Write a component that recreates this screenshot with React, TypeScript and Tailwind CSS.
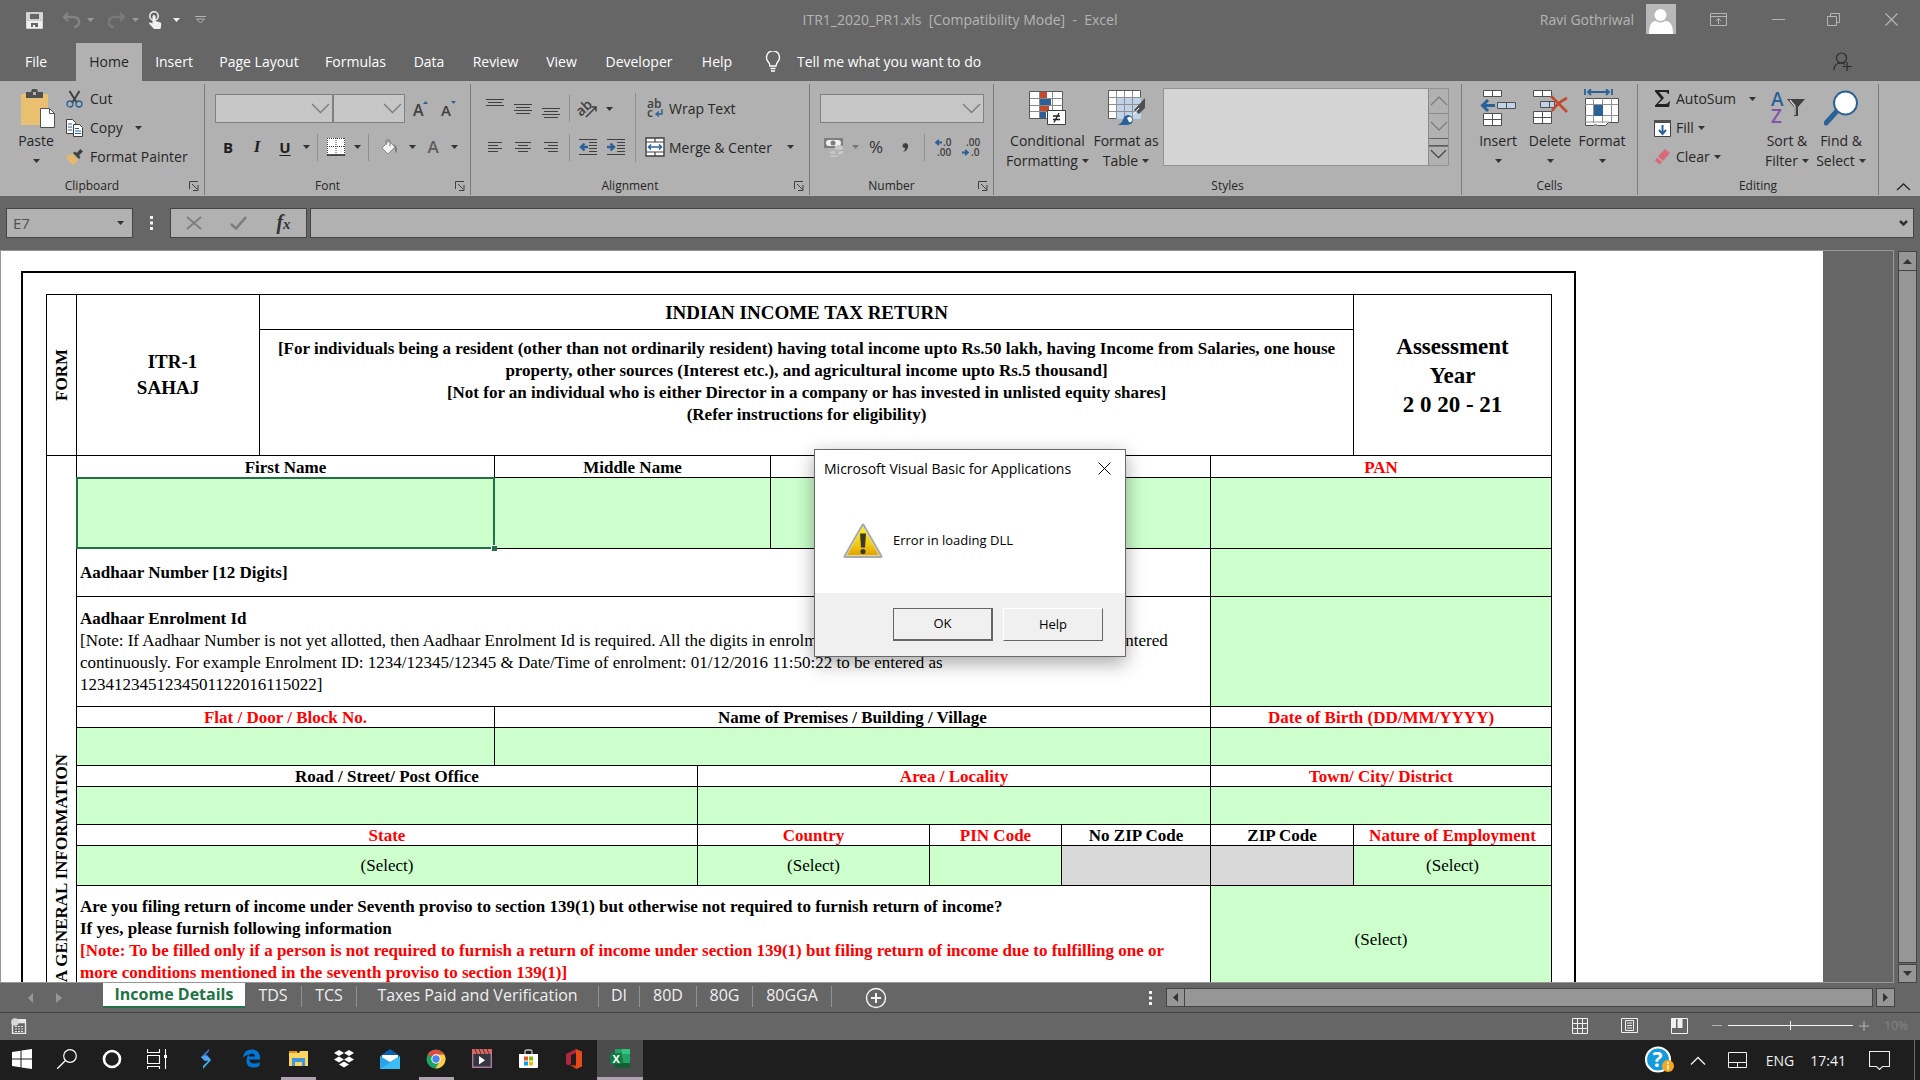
import type { ReactNode } from "react";
import clsx from "clsx";

const INK = "#404040";
const BLUE = "#2b6199";

/* ---------- small shared pieces ---------- */

function Caret({ color = "#333333" }: { color?: string }) {
  return (
    <svg width="7" height="4" viewBox="0 0 7 4" className="shrink-0">
      <path d="M0 0h7L3.500 4z" fill={color} />
    </svg>
  );
}

function CaretButton({ label, color }: { label: string; color?: string }) {
  return (
    <button aria-label={label} className="flex h-7 w-3.5 items-center justify-center">
      <Caret color={color} />
    </button>
  );
}

function IconButton({ label, className, children }: { label: string; className?: string; children: ReactNode }) {
  return (
    <button aria-label={label} className={clsx("flex h-7 shrink-0 items-center justify-center", className ?? "w-7")}>
      {children}
    </button>
  );
}

function Divider() {
  return <span className="mx-1 h-[27px] w-px shrink-0 bg-[#8f8f8f]" />;
}

function RibbonSelect({ label, className }: { label: string; className: string }) {
  return (
    <span className={clsx("relative flex h-[29px]", className)}>
      <select aria-label={label} className="h-full w-full appearance-none border border-[#808080] bg-[#c6c6c6]" />
      <svg width="19" height="11" viewBox="0 0 19 11" className="pointer-events-none absolute top-[9px] right-[3px]">
        <path d="M1 1l8.500 8.500L18 1" fill="none" stroke="#7a7a7a" strokeWidth="1.300" />
      </svg>
    </span>
  );
}

function Group({
  name,
  className,
  launcher,
  children,
}: {
  name: string;
  className: string;
  launcher?: boolean;
  children: ReactNode;
}) {
  return (
    <section aria-label={name} className={clsx("flex flex-col border-r border-[#7b7b7b]", className)}>
      <div className="flex h-[91px] flex-none">{children}</div>
      <div className="flex h-5 items-center pt-[2px] text-[12px] leading-[18px] text-[#262626]">
        <span className="flex-1 text-center">{name}</span>
        {launcher && (
          <button aria-label={`${name} settings`} className="flex w-5 justify-center">
            <svg width="10" height="10" viewBox="0 0 10 10">
              <path d="M.5 8V.5H9M3 3l5.500 5.500M9 4v5.500H4" fill="none" stroke={INK} />
            </svg>
          </button>
        )}
      </div>
    </section>
  );
}

function BigButton({ icon, lines, className }: { icon: ReactNode; lines: [string, string?]; className: string }) {
  return (
    <button className={clsx("flex shrink-0 flex-col items-center text-[14px] leading-5 text-[#262626]", className)}>
      <span className="flex h-[47px] items-center justify-center">{icon}</span>
      <span className="whitespace-nowrap">{lines[0]}</span>
      <span className="flex h-5 items-center gap-1 whitespace-nowrap">
        {lines[1]}
        <Caret />
      </span>
    </button>
  );
}

/* ---------- title bar ---------- */

function TitleBar() {
  return (
    <header className="flex h-[43px] items-start text-[14px] text-[#b5b5b5]">
      <div className="flex h-10 w-[420px] items-center pl-5">
        <IconButton label="Save">
          <svg width="17" height="17" viewBox="0 0 17 17">
            <path d="M1 1h15v15H1zM3 2v6h11V2" fill="none" stroke="#f0f0f0" strokeWidth="1.600" />
            <path d="M1 9h15v7H1z" fill="#f0f0f0" />
            <path d="M5 11h7v4H9v-2H7v2H5z" fill="#666" />
          </svg>
        </IconButton>
        <IconButton label="Undo" className="ml-[11px] w-6">
          <svg width="19" height="16" viewBox="0 0 19 16">
            <path d="M6 1L2 5l4 4M2 5h9q6 0 6 5t-5 5" fill="none" stroke="#838383" strokeWidth="2.400" />
          </svg>
        </IconButton>
        <CaretButton label="Undo history" color="#9a9a9a" />
        <IconButton label="Redo" className="ml-[7px] w-6">
          <svg width="19" height="16" viewBox="0 0 19 16">
            <path d="M13 1l4 4-4 4M17 5H8Q2 5 2 10t5 5" fill="none" stroke="#7a7a7a" strokeWidth="2.400" />
          </svg>
        </IconButton>
        <CaretButton label="Redo history" color="#9a9a9a" />
        <IconButton label="Touch/Mouse Mode" className="ml-[3px] w-5">
          <svg width="15" height="18" viewBox="0 0 15 18">
            <circle cx="6" cy="5" r="4.200" fill="none" stroke="#f0f0f0" strokeWidth="1.500" />
            <path d="M4.500 5q1.500-2 3 0v5l5 1.500q1 .5.800 2L12.500 18H6L1 12.500q0-2 3.500 0z" fill="#f0f0f0" />
          </svg>
        </IconButton>
        <IconButton label="Touch options" className="ml-[3px] w-4">
          <Caret color="#f0f0f0" />
        </IconButton>
        <IconButton label="Customize Quick Access Toolbar" className="w-8">
          <svg width="11" height="8" viewBox="0 0 11 8">
            <path d="M0 .5h11M1.500 3h8l-4 4z" fill="none" stroke="#b5b5b5" />
          </svg>
        </IconButton>
      </div>
      <h1 className="flex h-[38px] flex-1 items-center justify-center whitespace-pre">
        {"ITR1_2020_PR1.xls  [Compatibility Mode]  -  Excel"}
      </h1>
      <div className="flex h-[38px] w-[420px] items-center justify-end">
        <span>Ravi Gothriwal</span>
        <svg width="30" height="30" viewBox="0 0 30 30" className="mr-[18px] ml-3">
          <path d="M0 0h30v30H0z" fill="#b8b8b8" />
          <circle cx="14.500" cy="11" r="6" fill="#fff" />
          <path d="M3 30q0-13 7-13 4.500 3 9 0 8 0 8 13z" fill="#fff" />
        </svg>
        <IconButton label="Ribbon Display Options" className="w-12">
          <svg width="17" height="13" viewBox="0 0 17 13">
            <path d="M.5.500h16v12H.5zM.5 3.500h16M8.500 11V5.500M6 8l2.500-2.500L11 8" fill="none" stroke="#b5b5b5" />
          </svg>
        </IconButton>
        <IconButton label="Minimize" className="ml-2 w-14">
          <span className="h-px w-[13px] bg-[#b5b5b5]" />
        </IconButton>
        <IconButton label="Restore" className="w-14">
          <svg width="14" height="13" viewBox="0 0 14 13">
            <path d="M.5 3.500h9v9h-9zM3.500 3.500v-3h9v9h-3" fill="none" stroke="#b5b5b5" />
          </svg>
        </IconButton>
        <IconButton label="Close" className="w-[58px]">
          <svg width="13" height="13" viewBox="0 0 13 13">
            <path d="M.5.500l12 12M12.500.500l-12 12" fill="none" stroke="#b5b5b5" strokeWidth="1.200" />
          </svg>
        </IconButton>
      </div>
    </header>
  );
}

const TABS = [
  { name: "Insert", width: "w-16" },
  { name: "Page Layout", width: "w-[106px]" },
  { name: "Formulas", width: "w-[87px]" },
  { name: "Data", width: "w-[60px]" },
  { name: "Review", width: "w-[73px]" },
  { name: "View", width: "w-[59px]" },
  { name: "Developer", width: "w-24" },
  { name: "Help", width: "w-[60px]" },
];

function RibbonTabs() {
  return (
    <nav className="flex h-[38px] items-stretch text-[14px] text-white">
      <button className="w-[76px] pr-1 pb-[2px]">File</button>
      <button className="w-[66px] bg-[#b1b1b1] pb-[2px] text-[#262626]">Home</button>
      {TABS.map((tab) => (
        <button key={tab.name} className={clsx("pb-[2px]", tab.width)}>
          {tab.name}
        </button>
      ))}
      <button className="ml-[18px] flex items-center gap-4 pb-[2px]">
        <svg width="16" height="21" viewBox="0 0 16 21">
          <path d="M5 15q0-2.500-2-4.500A6.500 6.500 0 1 1 13 10.500q-2 2-2 4.500zM5.500 17.500h5M6 20h4" fill="none" stroke="#fff" strokeWidth="1.400" />
        </svg>
        Tell me what you want to do
      </button>
      <button aria-label="Share" className="mr-[67px] ml-auto">
        <svg width="20" height="20" viewBox="0 0 20 20">
          <circle cx="8.500" cy="6" r="5" fill="none" stroke="#2b2b2b" strokeWidth="1.200" />
          <path d="M1 18q0-7 7-7 2.500 0 4 1.500M9.500 14.500h9M14 10v9" fill="none" stroke="#2b2b2b" strokeWidth="1.200" />
        </svg>
      </button>
    </nav>
  );
}

/* ---------- ribbon ---------- */

function Lines({ rows, height = 18 }: { rows: [number, number, number][]; height?: number }) {
  return (
    <svg width="18" height={height} viewBox={`0 0 18 ${height}`}>
      {rows.map(([x, y, w]) => (
        <path key={y} d={`M${x} ${y + 0.5}h${w}`} stroke={INK} />
      ))}
    </svg>
  );
}

function ClipboardGroup() {
  return (
    <Group name="Clipboard" className="w-[205px] shrink-0" launcher>
      <BigButton
        className="ml-[9px] w-[54px]"
        lines={["Paste"]}
        icon={
          <svg width="40" height="40" viewBox="-4 0 40 40">
            <path d="M1 6h27v31H1z" fill="#e8c06f" />
            <path d="M6 4h5l1-3h5l1 3h5v6H6z" fill="#505050" />
            <path d="M13 4h3v3h-3z" fill="#b1b1b1" />
            <path d="M20.500 20.500h9l5 5v14h-14z" fill="#fff" stroke="#505050" />
            <path d="M29.500 20.500v5h5" fill="none" stroke="#505050" />
          </svg>
        }
      />
      <div className="flex flex-col pl-[3px] text-[14px] text-[#262626]">
        <button className="flex h-[29px] items-center gap-[7px]">
          <svg width="17" height="18" viewBox="0 0 17 18">
            <path d="M3.500 1l7.500 12M13.500 1L6 13" stroke={INK} strokeWidth="2" />
            <circle cx="4" cy="14" r="3" fill="none" stroke={BLUE} strokeWidth="1.300" />
            <circle cx="13" cy="14" r="3" fill="none" stroke={BLUE} strokeWidth="1.300" />
          </svg>
          Cut
        </button>
        <div className="flex h-[29px] items-center">
          <button className="flex items-center gap-[7px]">
            <svg width="17" height="18" viewBox="0 0 17 18">
              <path d="M.5.500h6l3 3v11h-9z" fill="#fff" stroke={INK} />
              <path d="M2 5h4M2 8h4M2 11h4" stroke={BLUE} />
              <path d="M7.500 5.500h6l3 3v9h-9z" fill="#fff" stroke={INK} />
              <path d="M9 9.500h4M9 12h6M9 14.500h6" stroke={BLUE} />
            </svg>
            Copy
          </button>
          <IconButton label="Copy options" className="ml-2 w-4">
            <Caret />
          </IconButton>
        </div>
        <button className="flex h-[29px] items-center gap-[7px] whitespace-nowrap">
          <svg width="17" height="16" viewBox="0 0 17 16">
            <path d="M0 7l6-2 6 6-4 5q-5-2-8-9z" fill="#e5b96d" />
            <path d="M7 4l6 6 1.500-2L13 6.500l4-4L14.500 0l-4 4L9 2.500z" fill={INK} />
          </svg>
          Format Painter
        </button>
      </div>
    </Group>
  );
}

function FontGroup() {
  return (
    <Group name="Font" className="w-[266px] shrink-0" launcher>
      <div className="flex flex-col gap-[10px] pt-[10px] pl-[10px]">
        <div className="flex items-center">
          <RibbonSelect label="Font family" className="w-[118px]" />
          <RibbonSelect label="Font size" className="w-[72px]" />
          <IconButton label="Increase font size" className="ml-[2px] w-7">
            <svg width="16" height="18" viewBox="0 0 16 18" className="overflow-visible">
              <text x="0" y="16" fontSize="16" fontWeight="600" fill={INK}>A</text>
              <path d="M10 4l2.500-3L15 4z" fill={BLUE} />
            </svg>
          </IconButton>
          <IconButton label="Decrease font size">
            <svg width="16" height="18" viewBox="0 0 16 18" className="overflow-visible">
              <text x="0" y="16" fontSize="15" fontWeight="600" fill={INK}>A</text>
              <path d="M10 1h5l-2.500 3z" fill={BLUE} />
            </svg>
          </IconButton>
        </div>
        <div className="flex items-center text-[15px] text-[#1f1f1f]">
          <button className="w-[26px] font-bold">B</button>
          <button className="ml-[2px] w-7 font-['Liberation_Serif',serif] text-[17px] font-bold italic">I</button>
          <button className="w-7 font-bold underline underline-offset-2">U</button>
          <CaretButton label="Underline style" />
          <Divider />
          <IconButton label="Borders" className="w-7">
            <svg width="18" height="18" viewBox="0 0 18 18">
              <path d="M0 0h18v17H0z" fill="#fff" />
              <path d="M0 .5h18M.5 0v17M17.500 0v17M9 0v17M0 8.500h18" stroke={INK} strokeDasharray="1 1" />
              <path d="M0 17h18" stroke="#222" strokeWidth="1.500" />
            </svg>
          </IconButton>
          <CaretButton label="Border options" />
          <Divider />
          <IconButton label="Fill Color" className="w-8">
            <svg width="17" height="17" viewBox="0 0 17 17">
              <path d="M8 2l6 6-7 7-6-6z" fill="#f2f2f2" stroke="#8a8a8a" />
              <path d="M5 6V2q2-3 4 0v5" fill="none" stroke="#8a8a8a" strokeWidth="1.300" />
              <path d="M12 5q5 1 4 9-3-1-2-6z" fill="#808080" />
            </svg>
          </IconButton>
          <CaretButton label="Fill color options" />
          <button className="w-7 text-[17px] font-semibold text-[#5e5e5e]">A</button>
          <CaretButton label="Font color options" />
        </div>
      </div>
    </Group>
  );
}

function IndentIcon({ flip }: { flip?: boolean }) {
  return (
    <svg width="18" height="16" viewBox="0 0 18 16">
      <path d="M0 .5h18M10 3.500h8M10 6.500h8M10 9.500h8M10 12.500h8M0 15.500h18" stroke={INK} />
      {flip ? (
        <path d="M0 8h6M3.500 4.500L7 8l-3.500 3.500" fill="none" stroke={BLUE} strokeWidth="2.400" />
      ) : (
        <path d="M9 8H3M5.500 4.500L2 8l3.500 3.500" fill="none" stroke={BLUE} strokeWidth="2.400" />
      )}
    </svg>
  );
}

function AlignmentGroup() {
  return (
    <Group name="Alignment" className="w-[339px] shrink-0" launcher>
      <div className="flex flex-col gap-[10px] pt-[10px] pl-[10px]">
        <div className="flex h-[29px] items-center">
          <IconButton label="Top Align"><Lines rows={[[0, 2, 18], [2, 5, 14], [0, 8, 18]]} height={23} /></IconButton>
          <IconButton label="Middle Align"><Lines rows={[[0, 4, 18], [2, 7, 14], [0, 10, 18], [2, 13, 14]]} /></IconButton>
          <IconButton label="Bottom Align"><Lines rows={[[0, 9, 18], [2, 12, 14], [0, 15, 18], [2, 18, 14]]} height={20} /></IconButton>
          <Divider />
          <IconButton label="Orientation" className="w-7">
            <svg width="20" height="18" viewBox="0 0 20 18" className="overflow-visible">
              <text x="-1" y="13" fontSize="14" fontWeight="600" fill={INK} transform="rotate(-42 6 10)">ab</text>
              <path d="M8 17L18 7M13.500 7H18v4.500" fill="none" stroke={INK} strokeWidth="1.500" />
            </svg>
          </IconButton>
          <CaretButton label="Orientation options" />
        </div>
        <div className="flex items-center">
          <IconButton label="Align Left"><Lines rows={[[2, 4, 14], [2, 7, 10], [2, 10, 14], [2, 13, 10]]} /></IconButton>
          <IconButton label="Center"><Lines rows={[[1, 4, 16], [4, 7, 10], [1, 10, 16], [4, 13, 10]]} /></IconButton>
          <IconButton label="Align Right"><Lines rows={[[2, 4, 14], [6, 7, 10], [2, 10, 14], [6, 13, 10]]} /></IconButton>
          <Divider />
          <IconButton label="Decrease Indent"><IndentIcon /></IconButton>
          <IconButton label="Increase Indent"><IndentIcon flip /></IconButton>
        </div>
      </div>
      <span className="mt-[9px] ml-[5px] h-[69px] w-px bg-[#8f8f8f]" />
      <div className="flex flex-col gap-[10px] pt-[10px] pl-[9px] text-[14px] text-[#262626]">
        <button className="flex h-[29px] items-center gap-1">
          <svg width="20" height="20" viewBox="0 0 20 20" className="overflow-visible">
            <text x="2" y="9" fontSize="12" fontWeight="600" fill={INK}>ab</text>
            <text x="2" y="18" fontSize="12" fontWeight="600" fill={INK}>c</text>
            <path d="M17 10v5h-5M14 12.500L11 15l3 2.500" fill="none" stroke={BLUE} strokeWidth="1.400" />
          </svg>
          Wrap Text
        </button>
        <div className="flex h-7 items-center">
          <button className="flex items-center gap-1 whitespace-nowrap">
            <svg width="20" height="20" viewBox="0 0 20 20">
              <path d="M1 1h18v18H1z" fill="#fff" stroke={INK} strokeWidth="1.400" />
              <path d="M1 5h18M1 15h18M10 1v4M10 15v4" stroke={INK} strokeWidth="1.200" />
              <path d="M4 10h12M6 7.500L3.500 10 6 12.500M14 7.500l2.500 2.500-2.500 2.500" fill="none" stroke={BLUE} strokeWidth="1.500" />
            </svg>
            Merge &amp; Center
          </button>
          <IconButton label="Merge options" className="ml-[11px] w-4">
            <Caret />
          </IconButton>
        </div>
      </div>
    </Group>
  );
}

function DecimalIcon({ decrease }: { decrease?: boolean }) {
  return (
    <svg width="18" height="19" viewBox="0 0 18 19" fontSize="10" fontWeight="600" fill={INK} className="overflow-visible">
      <text x={decrease ? 4 : 9} y="8">{decrease ? ".00" : ".0"}</text>
      <text x={decrease ? 9 : 3} y="18">{decrease ? ".0" : ".00"}</text>
      {decrease ? (
        <path d="M0 14.500h5M3 12l3 2.500L3 17" fill="none" stroke={BLUE} strokeWidth="1.800" />
      ) : (
        <path d="M8 4.500H3M5 2L2 4.500 5 7" fill="none" stroke={BLUE} strokeWidth="1.800" />
      )}
    </svg>
  );
}

function NumberGroup() {
  return (
    <Group name="Number" className="w-[184px] shrink-0" launcher>
      <div className="flex flex-col gap-[10px] pt-[10px] pl-[10px]">
        <RibbonSelect label="Number format" className="w-[164px]" />
        <div className="flex items-center">
          <IconButton label="Accounting Number Format" className="w-7">
            <svg width="20" height="19" viewBox="0 0 20 19">
              <path d="M0 0h19v10H0z" fill="#7d7d7d" />
              <path d="M2 5q0-3 3-3h9q3 0 3 3t-3 3H5Q2 8 2 5z" fill="#f0f0f0" />
              <circle cx="9" cy="5" r="2.500" fill="#7d7d7d" />
              <ellipse cx="15" cy="9" rx="4" ry="2" fill="#c9c9c9" />
              <path d="M11 9v6q4 3 8 0V9zM6 14q4-3 8 0v4q-4 2-8 0z" fill="#c9c9c9" />
              <path d="M11 12q4 2 8 0M6 16q4 2 8 0" fill="none" stroke="#999" strokeWidth=".8" />
            </svg>
          </IconButton>
          <CaretButton label="Currency options" color="#777777" />
          <button className="w-7 text-[17px] leading-7 text-[#333]">%</button>
          <button className="flex h-7 w-[30px] items-center justify-center" aria-label="Comma Style">
            <svg width="7" height="9" viewBox="0 0 7 9">
              <path d="M3.500 0Q7 .5 6 4.500 5 8 1 9q2.500-2 2-4Q.5 5 .5 2.500.8.200 3.500 0z" fill={INK} />
            </svg>
          </button>
          <Divider />
          <IconButton label="Increase Decimal"><DecimalIcon /></IconButton>
          <IconButton label="Decrease Decimal"><DecimalIcon decrease /></IconButton>
        </div>
      </div>
    </Group>
  );
}

function StylesGroup() {
  return (
    <Group name="Styles" className="min-w-0 flex-1">
      <BigButton
        className="ml-3 w-[83px]"
        lines={["Conditional", "Formatting"]}
        icon={
          <svg width="37" height="34" viewBox="0 0 37 34">
            <path d="M.5.500h33v27H.5z" fill="#fff" stroke="#595959" />
            <path d="M11 1h7v6h-7zM11 14h9v6h-9z" fill="#c24a2a" />
            <path d="M11 8h11v6H11zM11 21h6v6h-6z" fill={BLUE} />
            <path d="M1 7.500h33M1 14.500h33M1 20.500h33M10.500 1v26M23.500 1v26" stroke="#8a8a8a" />
            <path d="M18.500 19.500h18v14h-18z" fill="#fff" stroke="#404040" />
            <path d="M24 25h7M24 28.500h7M30 22l-5 9.500" stroke="#222" strokeWidth="1.300" />
          </svg>
        }
      />
      <BigButton
        className="w-[74px]"
        lines={["Format as", "Table"]}
        icon={
          <svg width="37" height="35" viewBox="0 0 37 35">
            <path d="M.5.500h32v28H.5z" fill="#fff" stroke="#595959" />
            <path d="M9 8h24v21H9z" fill="#c1d3e9" />
            <path d="M1 7.500h32M1 14.500h32M1 21.500h32M8.500 1v28M16.500 1v28M24.500 1v28" stroke="#909090" />
            <path d="M37 8v10l-6 6-5-4z" fill="#505050" />
            <path d="M31 18l-6 7" stroke="#fff" />
            <path d="M10 35q5-3 6-8 4-4 8 0 3 7-5 8z" fill={BLUE} />
            <path d="M19 28q4-3 5 1 0 4-3 3z" fill="#fff" />
          </svg>
        }
      />
      <div className="mt-1 mr-3 flex h-[78px] flex-1 border border-[#929292]">
        <div className="flex-1 bg-[#d4d4d4]" />
        <div className="flex w-5 flex-col border-l border-[#8a8a8a]">
          <button aria-label="Previous styles" className="flex h-[25px] items-center justify-center border-b border-[#8a8a8a]">
            <svg width="18" height="10" viewBox="0 0 18 10"><path d="M1 9l8-8 8 8" fill="none" stroke="#7d7d7d" strokeWidth="1.300" /></svg>
          </button>
          <button aria-label="Next styles" className="flex h-6 items-center justify-center">
            <svg width="18" height="10" viewBox="0 0 18 10"><path d="M1 1l8 8 8-8" fill="none" stroke="#7d7d7d" strokeWidth="1.300" /></svg>
          </button>
          <button aria-label="More styles" className="flex flex-1 items-center justify-center border-t border-[#666]">
            <svg width="20" height="18" viewBox="0 0 20 18">
              <path d="M0 2.500h20M2 7l8 8 8-8" fill="none" stroke={INK} strokeWidth="1.300" />
            </svg>
          </button>
        </div>
      </div>
    </Group>
  );
}

function CellsGroup() {
  return (
    <Group name="Cells" className="w-[176px] shrink-0">
      <BigButton
        className="ml-[10px] w-[52px]"
        lines={["Insert"]}
        icon={
          <svg width="36" height="36" viewBox="0 0 36 36">
            <path d="M3.500.500h18v6h-18zM3.500 23.500h18v12h-18z" fill="#fff" stroke="#505050" />
            <path d="M12.500 1v5M12.500 24v11M4 29.500h17" stroke="#505050" />
            <path d="M17.500 12.500h18v6h-18z" fill="#c1d3e9" stroke="#505050" />
            <path d="M26.500 13v5" stroke="#505050" />
            <path d="M15 15.500H3M8 10l-5.500 5.500L8 21" fill="none" stroke={BLUE} strokeWidth="3" />
          </svg>
        }
      />
      <BigButton
        className="w-[52px]"
        lines={["Delete"]}
        icon={
          <svg width="36" height="36" viewBox="0 0 36 36">
            <path d="M1.500.500h18v6h-18zM1.500 21.500h18v12h-18z" fill="#fff" stroke="#505050" />
            <path d="M10.500 1v5M10.500 22v11M2 27.500h17" stroke="#505050" />
            <path d="M8.500 11.500h14v6h-14z" fill="#c1d3e9" stroke="#505050" />
            <path d="M17.500 12v5" stroke="#505050" />
            <path d="M19 6q7 7 16 16M35 8q-10 5-15 13" fill="none" stroke="#c24a2a" strokeWidth="2.600" />
          </svg>
        }
      />
      <BigButton
        className="w-[52px]"
        lines={["Format"]}
        icon={
          <svg width="36" height="38" viewBox="0 0 36 38">
            <path d="M1 0v6M28 0v6M4 3h21M7 0L4 3l3 3M22 0l3 3-3 3" fill="none" stroke={BLUE} strokeWidth="1.800" />
            <path d="M1.500 9.500h33v24h-10l-3 3h-8l-2-1-2 1h-8z" fill="#fff" stroke="#505050" />
            <path d="M1 15.500h33M1 26.500h33M9.500 9v25M18.500 9v25M27.500 9v24M1 33h24" stroke="#909090" />
            <path d="M10 16h9v11h-9z" fill={BLUE} />
          </svg>
        }
      />
    </Group>
  );
}

function EditingGroup() {
  return (
    <Group name="Editing" className="w-[241px] shrink-0">
      <div className="flex w-[121px] flex-col pl-4 text-[14px] text-[#262626]">
        <div className="flex h-[29px] items-center">
          <button className="flex items-center gap-1">
            <svg width="18" height="17" viewBox="0 0 18 17">
              <path d="M1 0h14v4h-1q-.5-2-3-2H5l5 6-6 6h7q3 0 4-2.500h1L15 17H1v-1.500L7 9 1 1.500z" fill="#222" />
            </svg>
            AutoSum
          </button>
          <IconButton label="AutoSum options" className="ml-2 w-4">
            <Caret />
          </IconButton>
        </div>
        <button className="flex h-[29px] items-center gap-1">
          <svg width="18" height="18" viewBox="0 0 18 18">
            <path d="M.5 3.500h16v14H.5z" fill="#fff" stroke={INK} />
            <path d="M0 1h17v3H0z" fill="#505050" />
            <path d="M8.500 6v9M5 11l3.500 4L12 11" fill="none" stroke={BLUE} strokeWidth="2" />
          </svg>
          <span className="flex items-center gap-1">Fill <Caret /></span>
        </button>
        <button className="flex h-[29px] items-center gap-1">
          <svg width="18" height="17" viewBox="0 0 18 17">
            <path d="M11 1l5 4-7 8-5-4.500z" fill="#d9687a" />
            <path d="M3 9.500L8 14l-2.500 2.500L1 12.500z" fill="#d9687a" />
          </svg>
          <span className="flex items-center gap-1">Clear <Caret /></span>
        </button>
      </div>
      <BigButton
        className="w-14"
        lines={["Sort &", "Filter"]}
        icon={
          <svg width="36" height="34" viewBox="0 0 36 34" className="overflow-visible">
            <text x="2" y="15" fontSize="19" fontWeight="600" fill={BLUE}>A</text>
            <text x="2" y="32" fontSize="19" fontWeight="600" fill="#8053a5">Z</text>
            <path d="M18 8h18l-7 8v9h-4v-9z" fill="#404040" />
            <path d="M21 9l5 6v9" fill="none" stroke="#e0e0e0" strokeWidth="1.200" />
          </svg>
        }
      />
      <BigButton
        className="w-[52px]"
        lines={["Find &", "Select"]}
        icon={
          <svg width="34" height="36" viewBox="0 0 34 36">
            <path d="M2 33l11-12" stroke={BLUE} strokeWidth="5" strokeLinecap="round" />
            <circle cx="21.500" cy="13" r="11.500" fill="#fff" stroke={BLUE} strokeWidth="2" />
          </svg>
        }
      />
    </Group>
  );
}

function Ribbon() {
  return (
    <div className="flex h-[115px] bg-[#b1b1b1] pt-[3px] pb-px">
      <div className="flex flex-1 items-stretch">
        <ClipboardGroup />
        <FontGroup />
        <AlignmentGroup />
        <NumberGroup />
        <StylesGroup />
        <CellsGroup />
        <EditingGroup />
      </div>
      <button aria-label="Collapse the Ribbon" className="mr-[9px] flex w-[32px] items-end justify-end pb-1">
        <svg width="15" height="9" viewBox="0 0 15 9">
          <path d="M1 8l6.500-6L14 8" fill="none" stroke="#262626" strokeWidth="1.300" />
        </svg>
      </button>
    </div>
  );
}

function Dots() {
  return (
    <svg width="3" height="14" viewBox="0 0 3 14">
      <path d="M0 0h3v3H0zM0 5.500h3v3H0zM0 11h3v3H0z" fill="#f5f5f5" />
    </svg>
  );
}

function FormulaBar() {
  return (
    <div className="flex h-[54px] items-start pt-3 pr-[6px] pl-[6px]">
      <div className="flex h-[30px] w-[127px] items-center border border-[#444] bg-[#b1b1b1] pr-2">
        <input aria-label="Name Box" defaultValue="E7" className="min-w-0 flex-1 bg-transparent pl-[6px] text-[15px] text-[#505050]" />
        <Caret />
      </div>
      <span className="flex h-[30px] w-[37px] items-center justify-center"><Dots /></span>
      <div className="flex h-[30px] w-[137px] items-center justify-around border border-[#444] bg-[#b1b1b1]">
        <IconButton label="Cancel">
          <svg width="16" height="14" viewBox="0 0 16 14"><path d="M1 1l14 12M15 1L1 13" stroke="#7d7d7d" strokeWidth="1.800" /></svg>
        </IconButton>
        <IconButton label="Enter">
          <svg width="17" height="14" viewBox="0 0 17 14"><path d="M1 8l5 4.500L16 1" fill="none" stroke="#7d7d7d" strokeWidth="2.600" /></svg>
        </IconButton>
        <button aria-label="Insert Function" className="w-7 font-['Liberation_Serif',serif] text-[20px] leading-7 font-bold text-[#333] italic">
          f<span className="text-[15px]">x</span>
        </button>
      </div>
      <div className="ml-[3px] flex h-[30px] flex-1 items-center border border-[#444] bg-[#b1b1b1] pr-[5px]">
        <input aria-label="Formula" className="min-w-0 flex-1 bg-transparent px-2 text-[14px]" />
        <svg width="9" height="7" viewBox="0 0 9 7"><path d="M1 1l3.500 3.500L8 1" fill="none" stroke="#333" strokeWidth="2.500" /></svg>
      </div>
    </div>
  );
}

/* ---------- sheet ---------- */

// widths of the form's columns, left to right
const COLUMNS = [30, 183, 235, 203, 73, 159, 132, 149, 143, 198];

const CELL = "border border-black p-0";
const GREEN = "border border-black bg-[#ccffcc] p-0";

function Head({ span = 1, red, children }: { span?: number; red?: boolean; children: ReactNode }) {
  return (
    <th colSpan={span} className={clsx("border border-black px-0 pt-[2px] pb-0 leading-[18px]", red && "text-[#ff0000]")}>
      {children}
    </th>
  );
}

function Entry({ span = 1, label }: { span?: number; label: string }) {
  return (
    <td colSpan={span} className={GREEN}>
      <input aria-label={label} className="block h-5 w-full bg-transparent px-1 outline-none" />
    </td>
  );
}

function Choice({ span = 1, label }: { span?: number; label: string }) {
  return (
    <td colSpan={span} className={GREEN}>
      <select aria-label={label} className="block h-6 w-full appearance-none bg-transparent text-center text-[17px] [text-align-last:center]">
        <option>(Select)</option>
      </select>
    </td>
  );
}

function TaxForm() {
  return (
    <table className="w-[1506px] table-fixed border-collapse text-[17px] leading-[22px]">
      <colgroup>
        {COLUMNS.map((width, i) => (
          <col key={i} style={{ width }} />
        ))}
      </colgroup>
      <tbody>
        <tr className="h-[35px]">
          <th rowSpan={2} className={CELL}>
            <span className="inline-block rotate-180 align-middle leading-5 [writing-mode:vertical-rl]">FORM</span>
          </th>
          <th rowSpan={2} className={clsx(CELL, "text-[19px] leading-[26px]")}>
            <span className="pl-[9px]">ITR-1</span>
            <br />
            SAHAJ
          </th>
          <th colSpan={7} className={clsx(CELL, "pt-[2px] text-[19px]")}>INDIAN INCOME TAX RETURN</th>
          <th rowSpan={2} className={clsx(CELL, "text-[23px] leading-[29px]")}>
            Assessment
            <br />
            Year
            <br />2 0 20 - 21
          </th>
        </tr>
        <tr className="h-[126px]">
          <th colSpan={7} className={clsx(CELL, "pt-2 align-top whitespace-nowrap")}>
            [For individuals being a resident (other than not ordinarily resident) having total income upto Rs.50 lakh, having Income from Salaries, one house
            <br />
            property, other sources (Interest etc.), and agricultural income upto Rs.5 thousand]
            <br />
            [Not for an individual who is either Director in a company or has invested in unlisted equity shares]
            <br />
            (Refer instructions for eligibility)
          </th>
        </tr>
        <tr className="h-[22px]">
          <th rowSpan={11} className={clsx(CELL, "align-bottom")}>
            <span className="inline-block rotate-180 pt-[11px] align-bottom leading-5 whitespace-nowrap [writing-mode:vertical-rl]">A GENERAL INFORMATION</span>
          </th>
          <Head span={2}>First Name</Head>
          <Head span={2}>Middle Name</Head>
          <Head span={3}>Last Name</Head>
          <Head span={2} red>PAN</Head>
        </tr>
        <tr className="h-[71px]">
          <td colSpan={2} className={clsx(GREEN, "relative")}>
            <input aria-label="First Name" className="block h-[70px] w-full bg-transparent px-1 outline-none" />
            {/* selection frame and its fill handle */}
            <span className="pointer-events-none absolute -inset-px border-2 border-[#217346]" />
            <span className="pointer-events-none absolute -right-[3px] -bottom-[3px] h-[6px] w-[6px] border-t border-l border-white bg-[#217346]" />
          </td>
          <Entry span={2} label="Middle Name" />
          <Entry span={3} label="Last Name" />
          <Entry span={2} label="PAN" />
        </tr>
        <tr className="h-12">
          <th colSpan={7} className={clsx(CELL, "pl-[3px] text-left")}>Aadhaar Number [12 Digits]</th>
          <Entry span={2} label="Aadhaar Number" />
        </tr>
        <tr className="h-[110px]">
          <td colSpan={7} className={clsx(CELL, "pl-[3px] whitespace-nowrap")}>
            <b>Aadhaar Enrolment Id</b>
            <br />
            [Note: If Aadhaar Number is not yet allotted, then Aadhaar Enrolment Id is required. All the digits in enrolment id and date/time of enrolment should be entered
            <br />
            continuously. For example Enrolment ID: 1234/12345/12345 &amp; Date/Time of enrolment: 01/12/2016 11:50:22 to be entered as
            <br />
            1234123451234501122016115022]
          </td>
          <Entry span={2} label="Aadhaar Enrolment Id" />
        </tr>
        <tr className="h-[21px]">
          <Head span={2} red>Flat / Door / Block No.</Head>
          <Head span={5}>Name of Premises / Building / Village</Head>
          <Head span={2} red>Date of Birth (DD/MM/YYYY)</Head>
        </tr>
        <tr className="h-[38px]">
          <Entry span={2} label="Flat / Door / Block No." />
          <Entry span={5} label="Name of Premises / Building / Village" />
          <Entry span={2} label="Date of Birth" />
        </tr>
        <tr className="h-[21px]">
          <Head span={3}>Road / Street/ Post Office</Head>
          <Head span={4} red>Area / Locality</Head>
          <Head span={2} red>Town/ City/ District</Head>
        </tr>
        <tr className="h-[38px]">
          <Entry span={3} label="Road / Street/ Post Office" />
          <Entry span={4} label="Area / Locality" />
          <Entry span={2} label="Town/ City/ District" />
        </tr>
        <tr className="h-[21px]">
          <Head span={3} red>State</Head>
          <Head span={2} red>Country</Head>
          <Head red>PIN Code</Head>
          <Head>No ZIP Code</Head>
          <Head>ZIP Code</Head>
          <Head red>Nature of Employment</Head>
        </tr>
        <tr className="h-10">
          <Choice span={3} label="State" />
          <Choice span={2} label="Country" />
          <Entry label="PIN Code" />
          <td className="border border-black bg-[#d9d9d9]" />
          <td className="border border-black bg-[#d9d9d9]" />
          <Choice label="Nature of Employment" />
        </tr>
        <tr className="h-[108px]">
          <th colSpan={7} className={clsx(CELL, "pt-[10px] pl-[3px] text-left align-top whitespace-nowrap")}>
            Are you filing return of income under Seventh proviso to section 139(1) but otherwise not required to furnish return of income?
            <br />
            If yes, please furnish following information
            <br />
            <span className="text-[#ff0000]">
              [Note: To be filled only if a person is not required to furnish a return of income under section 139(1) but filing return of income due to fulfilling one or
              <br />
              more conditions mentioned in the seventh proviso to section 139(1)]
            </span>
          </th>
          <Choice span={2} label="Filing under Seventh proviso" />
        </tr>
      </tbody>
    </table>
  );
}

function ScrollArrow({ label, d, className }: { label: string; d: string; className: string }) {
  return (
    <button aria-label={label} className={clsx("flex shrink-0 items-center justify-center border border-[#444] bg-[#969696]", className)}>
      <svg width="9" height="9" viewBox="0 0 9 9"><path d={d} fill="#333" /></svg>
    </button>
  );
}

function Sheet() {
  return (
    <main className="flex min-h-0 flex-1">
      <div className="flex min-w-0 flex-1 overflow-hidden border border-[#979797]">
        <div className="min-w-0 flex-1 overflow-hidden bg-white pt-5 pl-5 font-['Liberation_Serif',serif] text-black">
          <div className="h-[900px] w-[1555px] border-2 border-black pt-[21px] pl-[23px]">
            <TaxForm />
          </div>
        </div>
        <div className="w-[70px] shrink-0" />
      </div>
      <div className="flex w-[26px] shrink-0 flex-col items-end pt-px pr-[3px] pl-1">
        <ScrollArrow label="Scroll up" d="M0 7h9L4.500 2z" className="h-5 w-[19px]" />
        <div className="w-[19px] flex-1 border-x border-b border-[#444] bg-[#969696]" />
        <ScrollArrow label="Scroll down" d="M0 2h9L4.500 7z" className="mt-px h-[19px] w-[19px]" />
      </div>
    </main>
  );
}

const SHEET_TABS = [
  { name: "TDS", width: "w-[57px]" },
  { name: "TCS", width: "w-[55px]" },
  { name: "Taxes Paid and Verification", width: "w-[242px]" },
  { name: "DI", width: "w-[41px]" },
  { name: "80D", width: "w-[57px]" },
  { name: "80G", width: "w-[56px]" },
  { name: "80GGA", width: "w-[79px]" },
];

function SheetTabs() {
  return (
    <div className="flex h-[30px] items-start border-b border-[#444] text-[16px] text-[#f0f0f0]">
      <div className="flex h-full w-[103px] items-center gap-[22px] pl-7">
        <button aria-label="Previous sheet"><svg width="6" height="10" viewBox="0 0 6 10"><path d="M5 0v10L0 5z" fill="#969696" /></svg></button>
        <button aria-label="Next sheet"><svg width="6" height="10" viewBox="0 0 6 10"><path d="M0 0v10l6-5z" fill="#969696" /></svg></button>
      </div>
      <button className="h-[25px] w-[142px] border-b-2 border-[#217346] bg-white pb-[2px] leading-5 font-bold whitespace-nowrap text-[#217346]">
        Income Details
      </button>
      {SHEET_TABS.map((tab) => (
        <button key={tab.name} className={clsx("mt-[3px] h-[21px] border-r border-[#929292] pb-1 leading-4 whitespace-nowrap", tab.width)}>
          {tab.name}
        </button>
      ))}
      <button aria-label="New sheet" className="ml-[33px] self-center">
        <svg width="22" height="22" viewBox="0 0 22 22">
          <circle cx="11" cy="11" r="9.500" fill="none" stroke="#f5f5f5" strokeWidth="1.400" />
          <path d="M11 6v10M6 11h10" stroke="#f5f5f5" strokeWidth="2" />
        </svg>
      </button>
      <div className="ml-auto flex h-full w-[771px] items-start gap-[14px] pt-[5px] pr-[25px]">
        <span className="pt-[3px]"><Dots /></span>
        <div className="flex flex-1">
          <ScrollArrow label="Scroll left" d="M7 0v9L2 4.500z" className="h-[19px] w-[19px]" />
          <div className="h-[19px] flex-1 border-y border-r border-[#444] bg-[#969696]" />
          <ScrollArrow label="Scroll right" d="M2 0v9l5-4.500z" className="ml-[3px] h-[19px] w-[19px]" />
        </div>
      </div>
    </div>
  );
}

function StatusBar() {
  return (
    <div className="flex h-[27px] items-center pr-3 pb-[2px] pl-[11px]">
      <button aria-label="Record Macro">
        <svg width="16" height="16" viewBox="0 0 16 16">
          <path d="M1.500 4.500h13v11h-13z" fill="none" stroke="#e8e8e8" strokeWidth="1.400" />
          <path d="M7 1h8v4H7z" fill="#e8e8e8" />
          <circle cx="4" cy="4" r="3.800" fill="#d8d8d8" />
          <path d="M4 8.500h9M4 11h9M4 13.500h9" stroke="#e8e8e8" strokeDasharray="2 1" />
        </svg>
      </button>
      <div className="ml-auto flex items-center gap-[33px]">
        <button aria-label="Normal">
          <svg width="16" height="16" viewBox="0 0 16 16"><path d="M.5.500h15v15H.5zM5.500 0v16M10.500 0v16M0 5.500h16M0 10.500h16" fill="none" stroke="#f0f0f0" /></svg>
        </button>
        <button aria-label="Page Layout">
          <svg width="17" height="15" viewBox="0 0 17 15"><path d="M.5.500h16v14H.5zM4.500 2.500h8v10h-8zM6 5h5M6 7.500h5M6 10h5" fill="none" stroke="#f0f0f0" /></svg>
        </button>
        <button aria-label="Page Break Preview">
          <svg width="17" height="16" viewBox="0 0 17 16">
            <path d="M.5.500h16v15H.5z" fill="none" stroke="#f0f0f0" />
            <path d="M1 1h4v9H1zM6.500 1h5v9h-5z" fill="#f0f0f0" />
          </svg>
        </button>
      </div>
      <div className="ml-6 flex items-center gap-[6px]">
        <button aria-label="Zoom out" className="flex h-4 w-[10px] items-center"><span className="h-px w-full bg-[#b5b5b5]" /></button>
        <svg width="125" height="9" viewBox="0 0 125 9"><path d="M0 4.500h125M62.500 0v9" stroke="#f5f5f5" /></svg>
        <button aria-label="Zoom in">
          <svg width="10" height="10" viewBox="0 0 10 10"><path d="M0 5h10M5 0v10" stroke="#b5b5b5" /></svg>
        </button>
      </div>
      <span className="ml-[15px] text-[12px] text-[#838383]">10%</span>
    </div>
  );
}

/* ---------- taskbar ---------- */

function TaskButton({
  label,
  state,
  width = "w-[46px]",
  children,
}: {
  label: string;
  state?: "open" | "active";
  width?: string;
  children: ReactNode;
}) {
  return (
    <button aria-label={label} className={clsx("flex h-full flex-col items-center", width, state === "active" && "bg-[#4c4c4c]")}>
      <span className="flex h-[37px] items-center">{children}</span>
      {state && <span className={clsx("h-[3px] bg-[#aea2b1]", state === "active" ? "w-full" : "w-[35px]")} />}
    </button>
  );
}

function Taskbar() {
  return (
    <footer className="flex h-10 items-center bg-[#1e1e1f] text-[14px] text-[#f0f0f0]">
      <div className="mr-1 flex h-full">
        <TaskButton label="Start" width="w-11">
          <svg width="20" height="20" viewBox="0 0 20 20"><path d="M0 3l8.500-1.200v7.700H0zM9.500 1.600L20 0v9.500H9.500zM0 10.500h8.500v7.700L0 17zM9.500 10.500H20V20L9.500 18.400z" fill="#fff" /></svg>
        </TaskButton>
        <TaskButton label="Search" width="w-[45px]">
          <svg width="20" height="20" viewBox="0 0 20 20"><circle cx="13" cy="7" r="6.300" fill="none" stroke="#fff" strokeWidth="1.200" /><path d="M8.500 11.500L0 20" stroke="#fff" strokeWidth="1.300" /></svg>
        </TaskButton>
        <TaskButton label="Cortana" width="w-[45px]">
          <svg width="20" height="20" viewBox="0 0 20 20"><circle cx="10" cy="10" r="8" fill="none" stroke="#fff" strokeWidth="2.600" /></svg>
        </TaskButton>
        <TaskButton label="Task View" width="w-[45px]">
          <svg width="20" height="20" viewBox="0 0 20 20">
            <path d="M.5 0v3.500h12V0M.5 6.500h12v8H.5zM.5 20v-2.500h12V20M18.500 0v20" fill="none" stroke="#fff" strokeWidth="1.100" />
            <path d="M17 6h3v3h-3z" fill="#fff" />
          </svg>
        </TaskButton>
      </div>
      <TaskButton label="S">
        <svg width="12" height="20" viewBox="0 0 12 20">
          <path d="M9 0L1 8l4 4 2-2-3-2 5-6z" fill="#3d7fd8" />
          <path d="M3 20l8-9-4-4-2 2 3 3-5 5z" fill="#35b9ee" />
          <path d="M1 8l6-2 4 5-6 1z" fill="#4fa3f0" />
        </svg>
      </TaskButton>
      <TaskButton label="Microsoft Edge">
        <svg width="18" height="19" viewBox="0 0 18 19">
          <path d="M0 8.500Q1 .5 9 .5q7 0 8 7v3H6q.5 4 5.500 4 3 0 5-1.500v4q-2 1.500-6 1.500-7 0-7-7 0-4 3-6Q2.500 6 0 8.500zM6 7.500h6Q12 4.500 9 4.500T6 7.500z" fill="#0078d7" fillRule="evenodd" />
        </svg>
      </TaskButton>
      <TaskButton label="File Explorer" state="open">
        <svg width="19" height="17" viewBox="0 0 19 17">
          <path d="M0 1h8l1 2H0z" fill="#d9980d" />
          <path d="M0 3h10l1-2h8v15H0z" fill="#fcd462" />
          <path d="M3 8h13v8h-3v-4H6v4H3z" fill="#3c97dd" />
        </svg>
      </TaskButton>
      <TaskButton label="Dropbox">
        <svg width="20" height="18" viewBox="0 0 20 18">
          <path d="M5 0l5 3-5 3-5-3zM15 0l5 3-5 3-5-3zM5 6.500l5 3-5 3-5-3zM15 6.500l5 3-5 3-5-3zM10 11.500l5 3-5 3-5-3z" fill="#fff" />
        </svg>
      </TaskButton>
      <TaskButton label="Mail">
        <svg width="20" height="20" viewBox="0 0 20 20">
          <path d="M0 7l10-7 10 7v3H0z" fill="#0a5fb0" />
          <path d="M2 6h16v8H2z" fill="#fff" />
          <path d="M0 7l10 6 10-6v13H0z" fill="#29a3ea" />
          <path d="M0 20L20 8v12z" fill="#3dbdf5" />
        </svg>
      </TaskButton>
      <TaskButton label="Google Chrome" state="open">
        <svg width="20" height="20" viewBox="0 0 20 20">
          <circle cx="10" cy="10" r="9.500" fill="#1da462" />
          <path d="M10 10L1.800 5.200A9.500 9.500 0 0 1 18.200 5.500z" fill="#dd4b3e" />
          <path d="M10 10V5.500h8.300A9.500 9.500 0 0 1 9.500 19.500L14 12z" fill="#ffcd40" />
          <circle cx="10" cy="10" r="4.700" fill="#fff" />
          <circle cx="10" cy="10" r="3.700" fill="#4a86ec" />
        </svg>
      </TaskButton>
      <TaskButton label="Movies & TV">
        <svg width="20" height="19" viewBox="0 0 20 19">
          <path d="M.7.700h18.600v17.600H.7z" fill="#363640" stroke="#a87aa0" strokeWidth="1.400" />
          <path d="M0 0h20v5H0z" fill="#d76a5c" />
          <path d="M3 0l2 5M7 0l2 5M11 0l2 5M15 0l2 5" stroke="#5b2e42" />
          <path d="M7 7v8.500l6-4.200z" fill="#fff" />
        </svg>
      </TaskButton>
      <TaskButton label="Microsoft Store">
        <svg width="19" height="20" viewBox="0 0 19 20">
          <path d="M6 5V2.500Q6 1 8 1h3q2 0 2 1.500V5" fill="none" stroke="#c0c0c0" strokeWidth="1.300" />
          <path d="M0 5h19v13q0 1-1 1H1q-1 0-1-1z" fill="#fff" />
          <path d="M5 7.500h4v4H5z" fill="#f25022" />
          <path d="M10 7.500h4v4h-4z" fill="#7fba00" />
          <path d="M5 12.500h4v4H5z" fill="#00a4ef" />
          <path d="M10 12.500h4v4h-4z" fill="#ffb900" />
        </svg>
      </TaskButton>
      <TaskButton label="Office">
        <svg width="16" height="20" viewBox="0 0 16 20">
          <path d="M10 0l6 2.500v15L10 20z" fill="#e64a19" />
          <path d="M10 0v4L5 6v9l-3 1.500-2-2V5z" fill="#b5263c" />
          <path d="M4 16l6 .5V20z" fill="#d83b01" />
        </svg>
      </TaskButton>
      <TaskButton label="Excel" state="active">
        <svg width="20" height="19" viewBox="0 0 20 19" className="overflow-visible">
          <path d="M5 0h15v19H5z" fill="#21a366" />
          <path d="M12 0h8v5h-8z" fill="#33c481" />
          <path d="M5 9h8v5H5z" fill="#107c41" />
          <path d="M5 14h15v5H5z" fill="#185c37" />
          <path d="M0 4h12v11H0z" fill="#107c41" />
          <text x="2.500" y="13.500" fontSize="11" fontWeight="700" fill="#fff">X</text>
        </svg>
      </TaskButton>
      <div className="ml-auto flex h-full items-center">
        <button aria-label="Get help" className="mr-4">
          <svg width="29" height="28" viewBox="0 0 29 28" className="overflow-visible">
            <circle cx="13" cy="13.500" r="12" fill="#149bdc" stroke="#fff" strokeWidth="2.200" />
            <text x="7.500" y="21" fontSize="21" fontWeight="700" fill="#fff">?</text>
            <circle cx="23" cy="20" r="6" fill="#f5a81c" />
            <path d="M23 16v2M23 19v4.500" stroke="#fff" strokeWidth="1.500" />
          </svg>
        </button>
        <button aria-label="Show hidden icons" className="mr-[22px]">
          <svg width="16" height="9" viewBox="0 0 16 9"><path d="M1 8.500l7-7 7 7" fill="none" stroke="#f0f0f0" strokeWidth="1.300" /></svg>
        </button>
        <button aria-label="Touchpad" className="mr-[19px]">
          <svg width="19" height="16" viewBox="0 0 19 16"><path d="M.5.500h18v15H.5zM.5 10.500h18M9.500 10.500v5" fill="none" stroke="#f0f0f0" /></svg>
        </button>
        <button className="mr-4">ENG</button>
        <time className="mr-[23px]">17:41</time>
        <button aria-label="Notifications" className="mr-6">
          <svg width="21" height="19" viewBox="0 0 21 19"><path d="M.5.500h20v15h-7l-3 3-3-3h-7z" fill="none" stroke="#f0f0f0" strokeWidth="1.100" /></svg>
        </button>
        <span className="mr-[5px] h-full w-px bg-[#6a6a6a]" />
      </div>
    </footer>
  );
}

/* ---------- error message ---------- */

function ErrorDialog() {
  return (
    <div
      role="dialog"
      aria-labelledby="dialog-title"
      className="absolute top-[449px] left-[814px] w-[312px] border border-[#6a6a6a] bg-white text-[14px] text-black shadow-[0_6px_18px_rgba(0,0,0,0.35)]"
    >
      <div className="flex h-9 items-center justify-between pr-[14px] pl-[9px]">
        <h2 id="dialog-title" className="whitespace-nowrap">Microsoft Visual Basic for Applications</h2>
        <button aria-label="Close dialog">
          <svg width="13" height="13" viewBox="0 0 13 13"><path d="M.5.500l12 12M12.500.500l-12 12" stroke="#000" /></svg>
        </button>
      </div>
      <div className="flex h-[107px] items-center gap-[10px] pt-[2px] pl-7 text-[13px]">
        <svg width="40" height="36" viewBox="0 0 40 36">
          <defs>
            <linearGradient id="warn" x1="0" y1="0" x2="0" y2="1">
              <stop offset="0" stopColor="#ffee00" />
              <stop offset=".6" stopColor="#f3cb12" />
              <stop offset="1" stopColor="#dfa300" />
            </linearGradient>
          </defs>
          <path d="M20 2L38 33.500H2z" fill="#a9a9a9" stroke="#a9a9a9" strokeWidth="3" strokeLinejoin="round" />
          <path d="M20 3.500L36.500 32.500H3.500z" fill="url(#warn)" stroke="#e9e2b0" strokeWidth=".8" strokeLinejoin="round" />
          <path d="M17 10.500h6l-1 14h-4z" fill="#3a3a2c" />
          <circle cx="20" cy="28.500" r="2.600" fill="#3a3a2c" />
        </svg>
        Error in loading DLL
      </div>
      <div className="flex h-[63px] items-start justify-end gap-[10px] bg-[#f0f0f0] pt-[15px] pr-[22px] text-[13px]">
        <button className="h-[33px] w-[100px] border border-r-2 border-b-2 border-[#666] bg-[#f0f0f0]">OK</button>
        <button className="h-[33px] w-[100px] border border-t-white border-r-[#666] border-b-[#666] border-l-white bg-[#f0f0f0]">Help</button>
      </div>
    </div>
  );
}

export default function App() {
  return (
    <div className="relative flex h-screen flex-col overflow-hidden bg-[#666666] font-['Open_Sans','Noto_Sans',sans-serif]">
      <TitleBar />
      <RibbonTabs />
      <Ribbon />
      <FormulaBar />
      <Sheet />
      <SheetTabs />
      <StatusBar />
      <Taskbar />
      <ErrorDialog />
    </div>
  );
}
